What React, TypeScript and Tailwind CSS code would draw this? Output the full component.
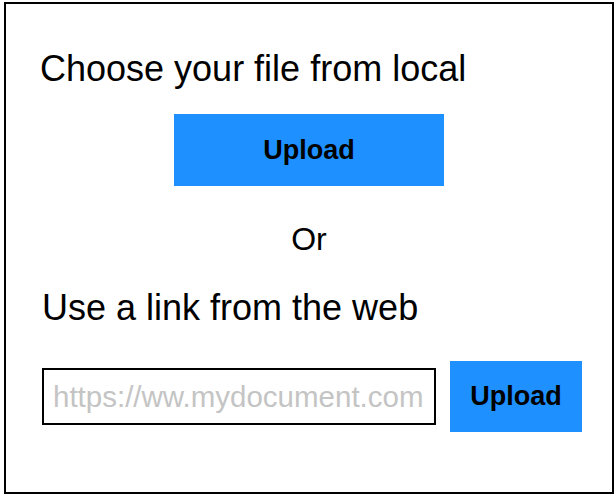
import React from 'react';

const App: React.FC = () => {
  const [link, setLink] = React.useState('');

  return (
    <div className="w-[616px] h-[496px] bg-white font-['Liberation_Sans',Arial,sans-serif] text-black pt-[2px] pl-[4px]">
      <div className="w-[610px] h-[492px] border-2 border-black pl-[36px] pt-[45px] flex flex-col">
        <h1 className="text-[36px] leading-[40px] -ml-[2px]">Choose your file from local</h1>

        <button className="mt-[25px] self-start ml-[132px] w-[270px] h-[72px] bg-[#1e90ff] text-[27px] font-bold">
          Upload
        </button>

        <p className="mt-[33px] text-[32px] leading-[40px] text-center pr-[36px]">Or</p>

        <h2 className="mt-[29px] text-[36px] leading-[40px]">Use a link from the web</h2>

        <div className="mt-[33px] flex items-center gap-[14px]">
          <input
            type="text"
            value={link}
            onChange={(e) => setLink(e.target.value)}
            placeholder="https://ww.mydocument.com"
            className="w-[394px] h-[57px] border-2 border-black pl-[9px] pr-[2px] text-[29.5px] outline-none placeholder:text-[#c4c4c4]"
          />
          <button className="w-[132px] h-[71px] bg-[#1e90ff] text-[27px] font-bold">Upload</button>
        </div>
      </div>
    </div>
  );
};

export default App;
